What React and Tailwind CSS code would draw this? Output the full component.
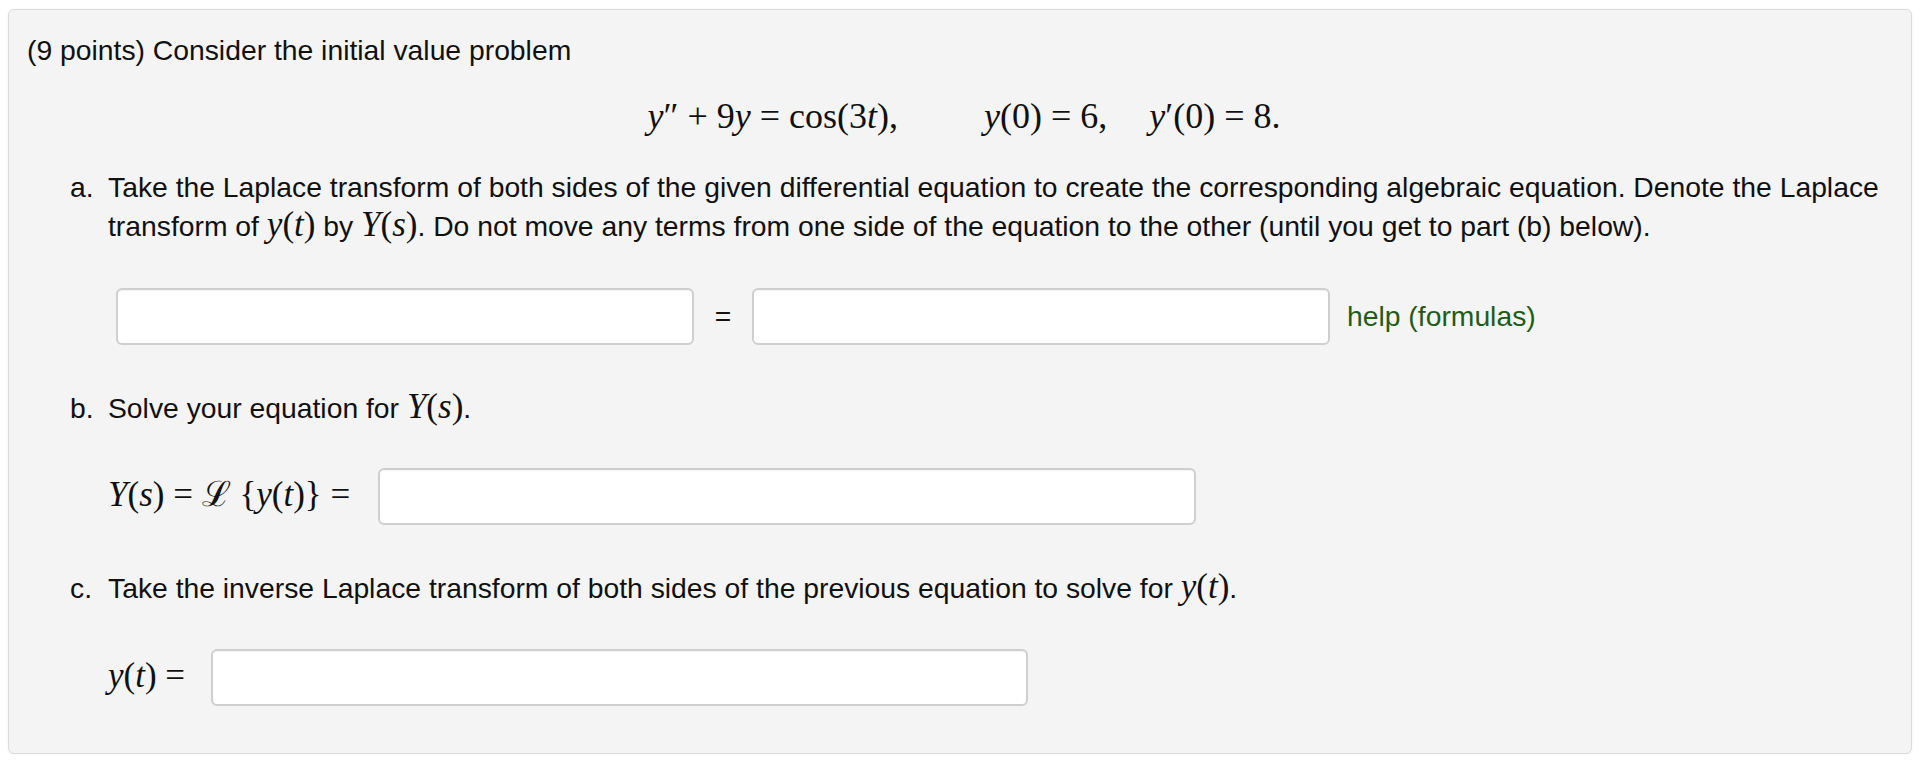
import React from 'react';

const serif = "font-['Liberation_Serif','Times_New_Roman',serif]";

// inline math, roughly MathJax look
function I({ children }) {
  return <span className="italic">{children}</span>;
}

function M({ children, className = '' }) {
  return <span className={`${serif} text-[35px] leading-none ${className}`}>{children}</span>;
}

function Box({ w }) {
  return (
    <div
      className={`h-[57px] ${w} rounded-[6px] border-2 border-[#cfcfcf] bg-white shadow-[inset_0_1px_1px_rgba(0,0,0,0.05)]`}
    />
  );
}

function Item({ label, children }) {
  return (
    <div className="flex">
      <div className="w-[38px] shrink-0">{label}</div>
      <div>{children}</div>
    </div>
  );
}

export default function App() {
  return (
    <div className="bg-white min-h-[776px] pt-[9px] pl-[8px] font-['Liberation_Sans',Arial,sans-serif] text-[28.3px] leading-[39px] text-[#111]">
      <div className="w-[1904px] rounded-[6px] border border-[#dcdcdc] bg-[#f4f4f4] shadow-[0_0_2px_rgba(0,0,0,0.08)] pt-[21px] pb-[47px] pl-[18px] pr-[10px]">
        <div>(9 points) Consider the initial value problem</div>

        <div className="mt-[24px] h-[44px] flex items-center justify-center">
          <M className="text-[36px]">
            <I>y</I>″ + 9<I>y</I> = cos(3<I>t</I>),
            <span className="inline-block w-[86px]" />
            <I>y</I>(0) = 6,
            <span className="inline-block w-[42px]" />
            <I>y</I>′(0) = 8.
          </M>
        </div>

        <div className="mt-[30px] pl-[43px]">
          <Item label="a.">
            Take the Laplace transform of both sides of the given differential equation to create the corresponding algebraic equation. Denote the Laplace
            transform of <M><I>y</I>(<I>t</I>)</M> by <M><I>Y</I>(<I>s</I>)</M>. Do not move any terms from one side of the equation to the other (until you get to part (b) below).
          </Item>

          <div className="mt-[42px] ml-[46px] flex items-center">
            <Box w="w-[578px]" />
            <span className="w-[58px] text-center">=</span>
            <Box w="w-[578px]" />
            <a className="ml-[17px] text-[#1f5c1a]">help (formulas)</a>
          </div>

          <div className="mt-[44px]">
            <Item label="b.">
              Solve your equation for <M><I>Y</I>(<I>s</I>)</M>.
            </Item>
          </div>

          <div className="mt-[40px] ml-[38px] flex items-center">
            <div className="w-[270px] shrink-0">
              <M>
                <I>Y</I>(<I>s</I>) = ℒ {'{'}<I>y</I>(<I>t</I>){'}'} =
              </M>
            </div>
            <Box w="w-[818px]" />
          </div>

          <div className="mt-[44px]">
            <Item label="c.">
              Take the inverse Laplace transform of both sides of the previous equation to solve for <M><I>y</I>(<I>t</I>)</M>.
            </Item>
          </div>

          <div className="mt-[41px] ml-[38px] flex items-center">
            <div className="w-[103px] shrink-0">
              <M>
                <I>y</I>(<I>t</I>) =
              </M>
            </div>
            <Box w="w-[817px]" />
          </div>
        </div>
      </div>
    </div>
  );
}
